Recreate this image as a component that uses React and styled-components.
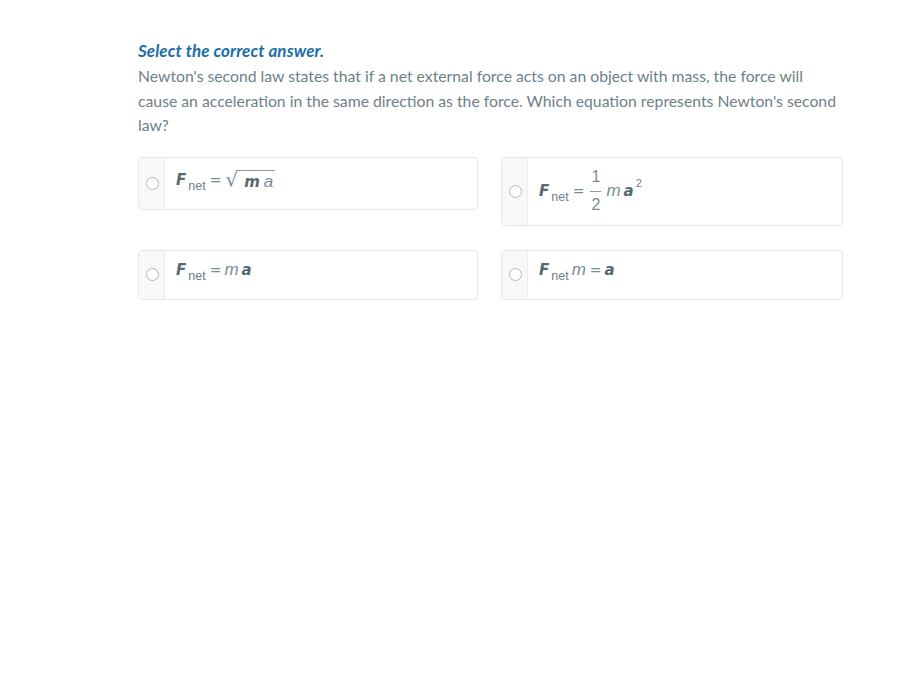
import React from "react";
import styled, { createGlobalStyle } from "styled-components";

const Global = createGlobalStyle`
  html, body { margin: 0; padding: 0; background: #ffffff; }
  body { font-family: "Lato", "Open Sans", sans-serif; }
`;

const Page = styled.div`
  width: 914px;
  min-height: 690px;
  box-sizing: border-box;
  padding: 40px 0 0 138px;
`;

const Question = styled.div`
  width: 705px;
`;

const Prompt = styled.div`
  font-family: "Lato", sans-serif;
  font-weight: 700;
  font-style: italic;
  font-size: 17px;
  letter-spacing: 0.1px;
  line-height: 22px;
  color: #1b6fa7;
`;

const Stem = styled.p`
  margin: 2px 0 0;
  font-family: "Lato", sans-serif;
  font-size: 15.75px;
  line-height: 24.5px;
  color: #6d8189;
`;

const Choices = styled.div`
  margin-top: 19px;
  display: grid;
  grid-template-columns: 340px 342px;
  column-gap: 23px;
  row-gap: 24px;
  align-items: start;
`;

const Card = styled.label`
  display: flex;
  border: 1px solid #e4e6e7;
  border-radius: 4px;
  background: #fff;
  min-height: ${(p) => p.$h}px;
  box-sizing: border-box;
  overflow: hidden;
`;

const RadioCol = styled.div`
  width: 25px;
  flex: none;
  display: flex;
  align-items: center;
  justify-content: center;
  background: #f8f8f8;
  border-right: 1px solid #ebeced;
`;

const Radio = styled.span`
  width: 13px;
  height: 13px;
  border-radius: 50%;
  border: 1px solid #b3b7b9;
  background: #fff;
  box-sizing: border-box;
  display: block;
  margin-left: 1px;
`;

const Body = styled.div`
  flex: 1;
  display: flex;
  align-items: ${(p) => (p.$center ? "center" : "flex-start")};
  padding: ${(p) => p.$pad};
`;

const Math = styled.span`
  font-family: "DejaVu Sans", "Liberation Sans", sans-serif;
  font-size: 16px;
  color: #5f737b;
  display: inline-flex;
  align-items: center;
  white-space: nowrap;
`;

const Var = styled.span`
  font-style: italic;
  font-weight: ${(p) => (p.$bold ? 700 : 400)};
  font-family: ${(p) => (p.$bold ? '"DejaVu Sans", sans-serif' : '"Liberation Sans", sans-serif')};
  font-size: ${(p) => (p.$bold ? 15 : 17)}px;
  margin-right: ${(p) => p.$mr || 0}px;
  color: ${(p) => (p.$bold ? "#57696f" : "#7a8c93")};
`;

const Sub = styled.span`
  font-family: "Liberation Sans", sans-serif;
  font-size: 12.5px;
  position: relative;
  top: 6px;
  margin-left: 2px;
  margin-right: ${(p) => p.$mr ?? 4}px;
  color: #6d8189;
`;

const Sup = styled.span`
  font-family: "Liberation Sans", sans-serif;
  font-size: 11px;
  position: relative;
  top: -8px;
  margin-left: 2px;
  color: #6d8189;
`;

const Eq = styled.span`
  font-family: "DejaVu Sans", sans-serif;
  font-size: 14px;
  margin: 0 3px 0 ${(p) => p.$ml || 0}px;
  color: #7a8c93;
`;

const Radical = styled.span`
  display: inline-flex;
  align-items: stretch;
  margin-left: 1px;
`;

const RootSign = styled.span`
  font-family: "DejaVu Sans", sans-serif;
  font-size: 20px;
  line-height: 21px;
  color: #7a8c93;
`;

const Radicand = styled.span`
  border-top: 1px solid #8a9aa0;
  padding: 2px 2px 0 6px;
  margin-top: 1px;
  line-height: 17px;
`;

const Frac = styled.span`
  display: inline-flex;
  flex-direction: column;
  align-items: center;
  font-family: "Liberation Sans", sans-serif;
  font-size: 16px;
  line-height: 16px;
  color: #7a8c93;
  margin: 0 5px 0 3px;
`;

const FracBar = styled.span`
  height: 1px;
  background: #8a9aa0;
  margin: 6px 0 5px;
  width: 11px;
`;

function Fnet({ mr }) {
  return (
    <>
      <Var $bold>F</Var>
      <Sub $mr={mr}>net</Sub>
    </>
  );
}

export default function App() {
  return (
    <>
      <Global />
      <Page>
        <Question>
          <Prompt>Select the correct answer.</Prompt>
          <Stem>
            Newton's second law states that if a net external force acts on an object with mass, the force will
            cause an acceleration in the same direction as the force. Which equation represents Newton's second
            law?
          </Stem>
          <Choices>
            <Card $h={53}>
              <RadioCol>
                <Radio />
              </RadioCol>
              <Body $pad="11px 10px 0 11px">
                <Math>
                  <Fnet />
                  <Eq>=</Eq>
                  <Radical>
                    <RootSign>√</RootSign>
                    <Radicand>
                      <Var $bold $mr={4}>m</Var>
                      <Var>a</Var>
                    </Radicand>
                  </Radical>
                </Math>
              </Body>
            </Card>
            <Card $h={69}>
              <RadioCol>
                <Radio />
              </RadioCol>
              <Body $pad="6px 10px 6px 11px" $center>
                <Math>
                  <Fnet />
                  <Eq>=</Eq>
                  <Frac>
                    <span>1</span>
                    <FracBar />
                    <span>2</span>
                  </Frac>
                  <Var $mr={3}>m</Var>
                  <Var $bold>a</Var>
                  <Sup>2</Sup>
                </Math>
              </Body>
            </Card>
            <Card $h={50}>
              <RadioCol>
                <Radio />
              </RadioCol>
              <Body $pad="9px 10px 0 11px">
                <Math>
                  <Fnet />
                  <Eq>=</Eq>
                  <Var $mr={3}>m</Var>
                  <Var $bold>a</Var>
                </Math>
              </Body>
            </Card>
            <Card $h={50}>
              <RadioCol>
                <Radio />
              </RadioCol>
              <Body $pad="9px 10px 0 11px">
                <Math>
                  <Fnet mr={3} />
                  <Var>m</Var>
                  <Eq $ml={4}>=</Eq>
                  <Var $bold>a</Var>
                </Math>
              </Body>
            </Card>
          </Choices>
        </Question>
      </Page>
    </>
  );
}
